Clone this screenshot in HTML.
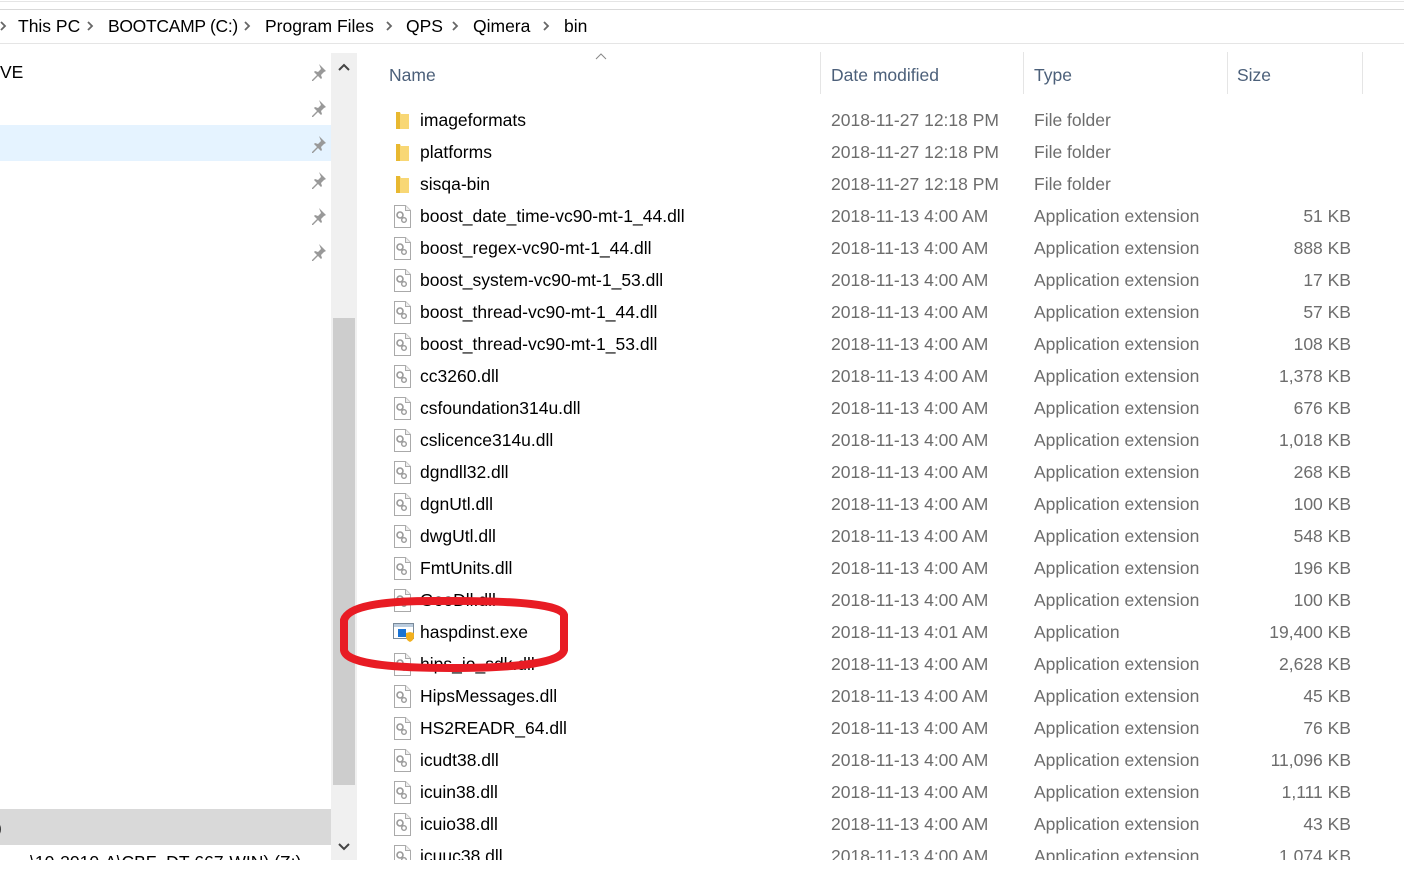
<!DOCTYPE html>
<html><head><style>
*{margin:0;padding:0;box-sizing:border-box}
body{width:1404px;height:870px;background:#fff;font-family:"Liberation Sans",sans-serif;position:relative;overflow:hidden}
.t{position:absolute;white-space:nowrap;font-size:17.5px;line-height:20px}
.bc{position:absolute;top:16px;font-size:17.5px;color:#000}
.ch{position:absolute;top:21px}
#main{position:absolute;left:357px;top:44px;width:1047px;height:816px;overflow:hidden}
.row{position:absolute;left:0;width:1047px;height:32px}
.row .n{position:absolute;left:63px;top:6px;color:#000;font-size:17.5px}
.row .d{position:absolute;left:474px;top:6px;color:#6d6d6d;font-size:17.5px}
.row .ty{position:absolute;left:677px;top:6px;color:#6d6d6d;font-size:17.5px}
.row .s{position:absolute;right:53px;top:6px;color:#6d6d6d;font-size:17.5px}
.ic{position:absolute;left:36px;top:5px}
</style></head><body>
<div style="position:absolute;top:1px;left:0;width:1404px;height:1px;background:#e5e5e5"></div>
<div style="position:absolute;top:9px;left:0;width:1404px;height:1px;background:#d9d9d9"></div>
<div style="position:absolute;top:43px;left:0;width:1404px;height:1px;background:#e5e5e5"></div>
<svg class="ch" style="left:0" width="8" height="10"><path d="M1 1l4 4-4 4" stroke="#666" stroke-width="1.8" fill="none"/></svg>
<span class="bc" style="left:18px">This PC</span><svg class="ch" style="left:87px" width="8" height="10"><path d="M1 1l4 4-4 4" stroke="#666" stroke-width="1.8" fill="none"/></svg>
<span class="bc" style="left:108px;letter-spacing:-0.3px">BOOTCAMP (C:)</span><svg class="ch" style="left:244px" width="8" height="10"><path d="M1 1l4 4-4 4" stroke="#666" stroke-width="1.8" fill="none"/></svg>
<span class="bc" style="left:265px">Program Files</span><svg class="ch" style="left:386px" width="8" height="10"><path d="M1 1l4 4-4 4" stroke="#666" stroke-width="1.8" fill="none"/></svg>
<span class="bc" style="left:406px">QPS</span><svg class="ch" style="left:452px" width="8" height="10"><path d="M1 1l4 4-4 4" stroke="#666" stroke-width="1.8" fill="none"/></svg>
<span class="bc" style="left:473px">Qimera</span><svg class="ch" style="left:543px" width="8" height="10"><path d="M1 1l4 4-4 4" stroke="#666" stroke-width="1.8" fill="none"/></svg>
<span class="bc" style="left:564px">bin</span>

<div style="position:absolute;left:0;top:44px;width:331px;height:816px;overflow:hidden">
<div class="t" style="left:0;top:18px;color:#000">VE</div>
<div style="position:absolute;left:0;top:81px;width:331px;height:36px;background:#e5f3ff"></div>
<div style="position:absolute;left:0;top:765px;width:331px;height:36px;background:#d9d9d9"></div>
<div class="t" style="left:-4px;top:774px">)</div>
<div class="t" style="left:30px;top:808px;color:#000">\10-2010-A\CBF_DT-667-WIN) (Z:)</div>
</div>
<svg style="position:absolute;left:310px;top:62px" width="18" height="200" viewBox="0 0 18 200" fill="#999">
<g id="p"><path d="M9 2l7 7-2 1-3 3 1 3-1 1-3-3-5 5-1 0 0-1 5-5-3-3 1-1 3 1 3-3z"/></g>
<use href="#p" y="36"/><use href="#p" y="72"/><use href="#p" y="108"/><use href="#p" y="144"/><use href="#p" y="180"/>
</svg>
<div style="position:absolute;left:331px;top:53px;width:26px;height:807px;background:#f0f0f0"></div>
<div style="position:absolute;left:333px;top:318px;width:22px;height:467px;background:#cdcdcd"></div>
<svg style="position:absolute;left:337px;top:60px" width="14" height="14"><path d="M2 10l5-5 5 5" stroke="#444" stroke-width="2" fill="none"/></svg>
<svg style="position:absolute;left:337px;top:840px" width="14" height="14"><path d="M2 4l5 5 5-5" stroke="#444" stroke-width="2" fill="none"/></svg>

<div id="main">
<svg style="position:absolute;left:238px;top:8px" width="12" height="8"><path d="M1 7l5-5 5 5" stroke="#888" fill="none"/></svg>
<div class="t" style="left:32px;top:21px;color:#4c607a">Name</div>
<div class="t" style="left:474px;top:21px;color:#4c607a">Date modified</div>
<div class="t" style="left:677px;top:21px;color:#4c607a">Type</div>
<div class="t" style="left:880px;top:21px;color:#4c607a">Size</div>
<div style="position:absolute;left:463px;top:8px;width:1px;height:42px;background:#e5e5e5"></div>
<div style="position:absolute;left:666px;top:8px;width:1px;height:42px;background:#e5e5e5"></div>
<div style="position:absolute;left:870px;top:8px;width:1px;height:42px;background:#e5e5e5"></div>
<div style="position:absolute;left:1005px;top:8px;width:1px;height:42px;background:#e5e5e5"></div>
<div id="rows"></div>
</div>
<svg style="position:absolute;left:0;top:0" width="1404" height="870"><path d="M344 620 Q350 600 440 601 Q560 600 564 615 L564 650 Q560 668 450 668 Q346 668 344 650 Z" fill="none" stroke="#e81c24" stroke-width="8"/></svg>
<script>
var F='File folder',A='Application extension',D='2018-11-13 4:00 AM';
var r=[["imageformats","2018-11-27 12:18 PM",F,"",1],["platforms","2018-11-27 12:18 PM",F,"",1],["sisqa-bin","2018-11-27 12:18 PM",F,"",1],
["boost_date_time-vc90-mt-1_44.dll",D,A,"51 KB"],["boost_regex-vc90-mt-1_44.dll",D,A,"888 KB"],["boost_system-vc90-mt-1_53.dll",D,A,"17 KB"],
["boost_thread-vc90-mt-1_44.dll",D,A,"57 KB"],["boost_thread-vc90-mt-1_53.dll",D,A,"108 KB"],["cc3260.dll",D,A,"1,378 KB"],
["csfoundation314u.dll",D,A,"676 KB"],["cslicence314u.dll",D,A,"1,018 KB"],["dgndll32.dll",D,A,"268 KB"],["dgnUtl.dll",D,A,"100 KB"],
["dwgUtl.dll",D,A,"548 KB"],["FmtUnits.dll",D,A,"196 KB"],["GeoDll.dll",D,A,"100 KB"],["haspdinst.exe","2018-11-13 4:01 AM","Application","19,400 KB",2],
["hips_io_sdk.dll",D,A,"2,628 KB"],["HipsMessages.dll",D,A,"45 KB"],["HS2READR_64.dll",D,A,"76 KB"],["icudt38.dll",D,A,"11,096 KB"],
["icuin38.dll",D,A,"1,111 KB"],["icuio38.dll",D,A,"43 KB"],["icuuc38.dll",D,A,"1,074 KB"]];
var h='';
r.forEach(function(x,i){
var ic;
if(x[4]==1)ic='<svg class="ic" width="18" height="22"><path d="M3 3h4l1 2h8v15H3z" fill="#f8d775"/><path d="M3 3h4v17H3z" fill="#e8b830"/></svg>';
else if(x[4]==2)ic='<svg class="ic" width="22" height="22"><rect x="0.5" y="2.5" width="20" height="15" fill="#fff" stroke="#7a8a9a"/><rect x="1" y="3" width="19" height="3" fill="#bcd"/><rect x="5" y="8" width="8" height="8" fill="#1a73d4"/><path d="M13 12l4-1 4 1v4q0 3-4 5q-4-2-4-5z" fill="#f2b01e"/></svg>';
else ic='<svg class="ic" width="20" height="24"><path d="M1.5 .5h11l5 5v17h-16z" fill="#fff" stroke="#aaa"/><path d="M12.5 .5v5h5" fill="#eee" stroke="#aaa"/><circle cx="7" cy="10" r="3" fill="none" stroke="#999" stroke-width="1.6"/><circle cx="11" cy="15" r="2.3" fill="none" stroke="#999" stroke-width="1.4"/></svg>';
h+='<div class="row" style="top:'+(60+i*32)+'px">'+ic+'<span class="n">'+x[0]+'</span><span class="d">'+x[1]+'</span><span class="ty">'+x[2]+'</span><span class="s">'+x[3]+'</span></div>';
});
document.getElementById('rows').innerHTML=h;
</script>
</body></html>
